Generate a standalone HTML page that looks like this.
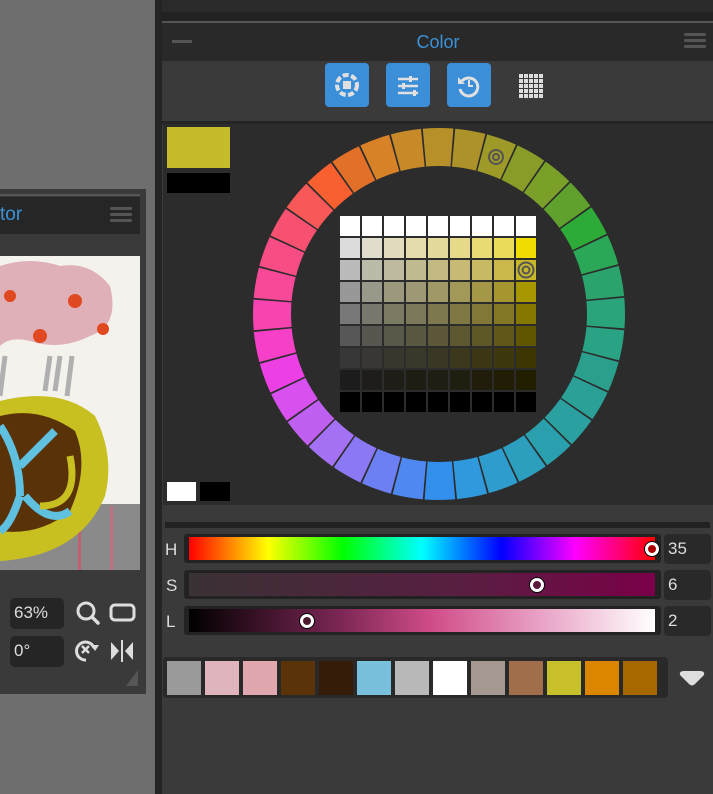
<!DOCTYPE html>
<html><head><meta charset="utf-8"><style>
*{margin:0;padding:0;box-sizing:border-box}
body{width:713px;height:794px;overflow:hidden;background:#6e6e6e;font-family:"Liberation Sans",sans-serif;position:relative}
.a{position:absolute}
</style></head><body>
<!-- left panel -->
<div class="a" style="left:0;top:189px;width:146px;height:505px;background:#3a3a3a"></div>
<div class="a" style="left:0;top:194px;width:140px;height:2px;background:#555"></div>
<div class="a" style="left:0;top:197px;width:140px;height:37px;background:#262626"></div>
<div class="a" style="left:0;top:204px;font-size:19px;color:#3a92d8">tor</div>
<div class="a" style="left:110px;top:207px;width:22px;height:3px;background:#555;border-radius:2px;box-shadow:0 6px 0 #555,0 12px 0 #555"></div>
<svg class="a" style="left:0;top:256px" width="140" height="314" viewBox="0 0 140 314">
<rect width="140" height="314" fill="#f4f2ec"/>
<rect x="0" y="248" width="140" height="66" fill="#8a8a8a"/>
<rect x="78" y="248" width="3" height="66" fill="#c06070"/><rect x="110" y="250" width="3" height="64" fill="#c07080"/>
<path d="M0 10 Q30 0 60 10 Q90 5 110 30 Q120 70 90 80 Q60 95 30 85 Q10 80 0 90Z" fill="#e0b0b8"/>
<circle cx="10" cy="40" r="6" fill="#e04820"/><circle cx="75" cy="45" r="7" fill="#e04820"/><circle cx="40" cy="80" r="7" fill="#e04820"/><circle cx="103" cy="73" r="6" fill="#e04820"/>
<path d="M50 100 l-5 35 M60 100 l-5 35 M72 100 l-5 40 M5 100 l-5 40" stroke="#b0b0b0" stroke-width="5"/>
<path d="M0 145 Q60 130 95 160 Q115 200 105 240 Q80 300 0 305Z" fill="#c8c020"/>
<path d="M0 160 Q40 150 75 175 Q90 210 70 255 Q40 280 0 275Z" fill="#5a3208"/>
<path d="M0 170 Q20 200 20 240 M20 210 Q40 190 55 175 M25 240 Q50 270 70 255 M20 240 Q10 270 0 275" stroke="#60c0e0" stroke-width="8" fill="none"/>
<path d="M40 250 Q80 250 70 200" stroke="#c8c020" stroke-width="7" fill="none"/>
</svg>
<div class="a" style="left:10px;top:598px;width:54px;height:31px;background:#252525;border-radius:5px;color:#ddd;font-size:17px;padding:5px 0 0 4px">63%</div>
<div class="a" style="left:10px;top:636px;width:54px;height:31px;background:#252525;border-radius:5px;color:#ddd;font-size:17px;padding:5px 0 0 4px">0°</div>
<svg class="a" style="left:74px;top:598px" width="70" height="90">
<circle cx="12" cy="13" r="8" stroke="#ddd" stroke-width="3" fill="none"/><path d="M18 19 l6 6" stroke="#ddd" stroke-width="3.5" stroke-linecap="round"/>
<rect x="37" y="7" width="23" height="15" rx="4" stroke="#ddd" stroke-width="3" fill="none"/>
<path d="M20 50 A9 9 0 1 0 12 62" stroke="#ddd" stroke-width="3" fill="none"/><path d="M8 48 l7 7 M15 48 l-7 7" stroke="#ddd" stroke-width="2.5"/><path d="M17 47 l8 0 l-4 6z" fill="#ddd"/>
<path d="M37 44 l8 9 l-8 9z M59 44 l-8 9 l8 9z" fill="#ddd"/><rect x="47" y="42" width="2" height="22" fill="#ddd"/>
<path d="M64 72 l0 16 l-12 0z" fill="#555"/>
</svg>
<!-- divider -->
<div class="a" style="left:155px;top:0;width:7px;height:794px;background:#242424"></div>
<!-- right panel -->
<div class="a" style="left:162px;top:0;width:551px;height:794px;background:#3a3a3a"></div>
<div class="a" style="left:162px;top:0;width:551px;height:12px;background:#2a2a2a"></div>
<div class="a" style="left:162px;top:12px;width:551px;height:9px;background:#222"></div>
<div class="a" style="left:162px;top:21px;width:551px;height:2px;background:#555"></div>
<div class="a" style="left:162px;top:23px;width:551px;height:38px;background:#292929"></div>
<div class="a" style="left:172px;top:40px;width:20px;height:3px;background:#555"></div>
<div class="a" style="left:0;top:32px;width:876px;text-align:center;font-size:18px;color:#3a92d8">Color</div>
<div class="a" style="left:684px;top:33px;width:22px;height:3px;background:#555;border-radius:2px;box-shadow:0 6px 0 #555,0 12px 0 #555"></div>
<div class="a" style="left:325px;top:63px;width:44px;height:44px;background:#3a8fd8;border-radius:4px"></div>
<div class="a" style="left:386px;top:63px;width:44px;height:44px;background:#3a8fd8;border-radius:4px"></div>
<div class="a" style="left:447px;top:63px;width:44px;height:44px;background:#3a8fd8;border-radius:4px"></div>
<svg class="a" style="left:325px;top:63px" width="230" height="44">
<circle cx="22" cy="22" r="10" stroke="#e0e0e0" stroke-width="4" fill="none" stroke-dasharray="6 2.5"/><rect x="18" y="18" width="8" height="8" fill="#e0e0e0"/>
<path d="M73 16 h20 M73 23 h20 M73 30 h20" stroke="#e0e0e0" stroke-width="2.5"/><rect x="84" y="13" width="3" height="6" fill="#e0e0e0"/><rect x="77" y="20" width="3" height="6" fill="#e0e0e0"/><rect x="88" y="27" width="3" height="6" fill="#e0e0e0"/>
<path d="M137 18 A9 9 0 1 1 135 26" stroke="#e0e0e0" stroke-width="3" fill="none"/><path d="M133 14 l0 7 l7 0z" fill="#e0e0e0"/><path d="M144 17 v6 h4" stroke="#e0e0e0" stroke-width="2" fill="none"/>
<g fill="#ddd">
<rect x="194" y="11" width="4" height="4"/><rect x="199" y="11" width="4" height="4"/><rect x="204" y="11" width="4" height="4"/><rect x="209" y="11" width="4" height="4"/><rect x="214" y="11" width="4" height="4"/>
<rect x="194" y="16" width="4" height="4"/><rect x="199" y="16" width="4" height="4"/><rect x="204" y="16" width="4" height="4"/><rect x="209" y="16" width="4" height="4"/><rect x="214" y="16" width="4" height="4"/>
<rect x="194" y="21" width="4" height="4"/><rect x="199" y="21" width="4" height="4"/><rect x="204" y="21" width="4" height="4"/><rect x="209" y="21" width="4" height="4"/><rect x="214" y="21" width="4" height="4"/>
<rect x="194" y="26" width="4" height="4"/><rect x="199" y="26" width="4" height="4"/><rect x="204" y="26" width="4" height="4"/><rect x="209" y="26" width="4" height="4"/><rect x="214" y="26" width="4" height="4"/>
<rect x="194" y="31" width="4" height="4"/><rect x="199" y="31" width="4" height="4"/><rect x="204" y="31" width="4" height="4"/><rect x="209" y="31" width="4" height="4"/><rect x="214" y="31" width="4" height="4"/>
</g>
</svg>
<div class="a" style="left:162px;top:121px;width:551px;height:3px;background:#242424"></div>
<div class="a" style="left:163px;top:124px;width:550px;height:381px;background:#2c2c2c"></div>
<div class="a" style="left:167px;top:127px;width:63px;height:41px;background:#c4bc2a"></div>
<div class="a" style="left:167px;top:173px;width:63px;height:20px;background:#000"></div>
<div class="a" style="left:167px;top:482px;width:29px;height:19px;background:#fff"></div>
<div class="a" style="left:200px;top:482px;width:30px;height:19px;background:#000"></div>
<svg class="a" style="left:0;top:0" width="713" height="520">
<g fill="none" stroke-width="38" stroke-dasharray="9.45 350.55">
<circle cx="439" cy="314" r="167" pathLength="360" stroke="#b8902a" transform="rotate(-95 439 314)"/>
<circle cx="439" cy="314" r="167" pathLength="360" stroke="#ac9228" transform="rotate(-85 439 314)"/>
<circle cx="439" cy="314" r="167" pathLength="360" stroke="#9e9a28" transform="rotate(-75 439 314)"/>
<circle cx="439" cy="314" r="167" pathLength="360" stroke="#8a9c28" transform="rotate(-65 439 314)"/>
<circle cx="439" cy="314" r="167" pathLength="360" stroke="#7aa02a" transform="rotate(-55 439 314)"/>
<circle cx="439" cy="314" r="167" pathLength="360" stroke="#60a02c" transform="rotate(-45 439 314)"/>
<circle cx="439" cy="314" r="167" pathLength="360" stroke="#2eaa38" transform="rotate(-35 439 314)"/>
<circle cx="439" cy="314" r="167" pathLength="360" stroke="#2aa858" transform="rotate(-25 439 314)"/>
<circle cx="439" cy="314" r="167" pathLength="360" stroke="#2aa46c" transform="rotate(-15 439 314)"/>
<circle cx="439" cy="314" r="167" pathLength="360" stroke="#2aa47a" transform="rotate(-5 439 314)"/>
<circle cx="439" cy="314" r="167" pathLength="360" stroke="#2aa284" transform="rotate(5 439 314)"/>
<circle cx="439" cy="314" r="167" pathLength="360" stroke="#2aa08c" transform="rotate(15 439 314)"/>
<circle cx="439" cy="314" r="167" pathLength="360" stroke="#2aa096" transform="rotate(25 439 314)"/>
<circle cx="439" cy="314" r="167" pathLength="360" stroke="#2aa0a0" transform="rotate(35 439 314)"/>
<circle cx="439" cy="314" r="167" pathLength="360" stroke="#2aa0ae" transform="rotate(45 439 314)"/>
<circle cx="439" cy="314" r="167" pathLength="360" stroke="#2c9ebe" transform="rotate(55 439 314)"/>
<circle cx="439" cy="314" r="167" pathLength="360" stroke="#2e9ccc" transform="rotate(65 439 314)"/>
<circle cx="439" cy="314" r="167" pathLength="360" stroke="#3098dc" transform="rotate(75 439 314)"/>
<circle cx="439" cy="314" r="167" pathLength="360" stroke="#3290ec" transform="rotate(85 439 314)"/>
<circle cx="439" cy="314" r="167" pathLength="360" stroke="#5088f2" transform="rotate(95 439 314)"/>
<circle cx="439" cy="314" r="167" pathLength="360" stroke="#6c80f4" transform="rotate(105 439 314)"/>
<circle cx="439" cy="314" r="167" pathLength="360" stroke="#8a78f4" transform="rotate(115 439 314)"/>
<circle cx="439" cy="314" r="167" pathLength="360" stroke="#a470f4" transform="rotate(125 439 314)"/>
<circle cx="439" cy="314" r="167" pathLength="360" stroke="#c060f2" transform="rotate(135 439 314)"/>
<circle cx="439" cy="314" r="167" pathLength="360" stroke="#d850f0" transform="rotate(145 439 314)"/>
<circle cx="439" cy="314" r="167" pathLength="360" stroke="#ec40e4" transform="rotate(155 439 314)"/>
<circle cx="439" cy="314" r="167" pathLength="360" stroke="#f640c8" transform="rotate(165 439 314)"/>
<circle cx="439" cy="314" r="167" pathLength="360" stroke="#f844b0" transform="rotate(175 439 314)"/>
<circle cx="439" cy="314" r="167" pathLength="360" stroke="#f84898" transform="rotate(185 439 314)"/>
<circle cx="439" cy="314" r="167" pathLength="360" stroke="#f84c84" transform="rotate(195 439 314)"/>
<circle cx="439" cy="314" r="167" pathLength="360" stroke="#f85070" transform="rotate(205 439 314)"/>
<circle cx="439" cy="314" r="167" pathLength="360" stroke="#f85858" transform="rotate(215 439 314)"/>
<circle cx="439" cy="314" r="167" pathLength="360" stroke="#f86030" transform="rotate(225 439 314)"/>
<circle cx="439" cy="314" r="167" pathLength="360" stroke="#e27028" transform="rotate(235 439 314)"/>
<circle cx="439" cy="314" r="167" pathLength="360" stroke="#d88228" transform="rotate(245 439 314)"/>
<circle cx="439" cy="314" r="167" pathLength="360" stroke="#c88a28" transform="rotate(255 439 314)"/>
</g>
<circle cx="496" cy="157" r="7" fill="none" stroke="#555" stroke-width="2"/><circle cx="496" cy="157" r="3" fill="none" stroke="#555" stroke-width="2"/>
</svg>
<div class="a" style="left:340px;top:216px;width:198px;height:196px;display:grid;grid-template-columns:repeat(9,20px);grid-auto-rows:20px;gap:2px">
<i style="background:#fff"></i><i style="background:#fff"></i><i style="background:#fff"></i><i style="background:#fff"></i><i style="background:#fff"></i><i style="background:#fff"></i><i style="background:#fff"></i><i style="background:#fff"></i><i style="background:#fff"></i>
<i style="background:#dcdcdc"></i><i style="background:#e0ddcc"></i><i style="background:#e2dcbc"></i><i style="background:#e4dcac"></i><i style="background:#e4da9c"></i><i style="background:#e6da8a"></i><i style="background:#e8da74"></i><i style="background:#eadc58"></i><i style="background:#f0dc00"></i>
<i style="background:#bababa"></i><i style="background:#bcbaa8"></i><i style="background:#bebaa0"></i><i style="background:#c0ba90"></i><i style="background:#c2b882"></i><i style="background:#c6ba74"></i><i style="background:#c8ba62"></i><i style="background:#cab84a"></i><i style="background:#c8b828"></i>
<i style="background:#989898"></i><i style="background:#9a9888"></i><i style="background:#9c987e"></i><i style="background:#9e9874"></i><i style="background:#a09866"></i><i style="background:#a29858"></i><i style="background:#a49848"></i><i style="background:#a69630"></i><i style="background:#a89800"></i>
<i style="background:#787878"></i><i style="background:#7a786c"></i><i style="background:#7c7a62"></i><i style="background:#7c785a"></i><i style="background:#7e784e"></i><i style="background:#807842"></i><i style="background:#827836"></i><i style="background:#847826"></i><i style="background:#847800"></i>
<i style="background:#575757"></i><i style="background:#58574f"></i><i style="background:#5a5848"></i><i style="background:#5a5840"></i><i style="background:#5c5838"></i><i style="background:#5e5830"></i><i style="background:#5e5826"></i><i style="background:#605818"></i><i style="background:#605600"></i>
<i style="background:#373737"></i><i style="background:#383733"></i><i style="background:#38372e"></i><i style="background:#3a382a"></i><i style="background:#3a3824"></i><i style="background:#3c381e"></i><i style="background:#3c3816"></i><i style="background:#3e380e"></i><i style="background:#3e3600"></i>
<i style="background:#1c1c1c"></i><i style="background:#1e1d1a"></i><i style="background:#1e1d18"></i><i style="background:#1e1d14"></i><i style="background:#201e12"></i><i style="background:#201e0e"></i><i style="background:#201e0a"></i><i style="background:#221e06"></i><i style="background:#221e00"></i>
<i style="background:#000"></i><i style="background:#000"></i><i style="background:#000"></i><i style="background:#000"></i><i style="background:#000"></i><i style="background:#000"></i><i style="background:#000"></i><i style="background:#000"></i><i style="background:#000"></i>
</div>
<svg class="a" style="left:516px;top:260px" width="20" height="20"><circle cx="10" cy="10" r="7.5" fill="none" stroke="#555" stroke-width="2"/><circle cx="10" cy="10" r="3.5" fill="none" stroke="#555" stroke-width="2"/></svg>
<!-- sliders -->
<div class="a" style="left:165px;top:522px;width:545px;height:6px;background:#222"></div>
<div class="a" style="left:165px;top:540px;font-size:17px;color:#ddd">H</div>
<div class="a" style="left:166px;top:576px;font-size:17px;color:#ddd">S</div>
<div class="a" style="left:166px;top:612px;font-size:17px;color:#ddd">L</div>
<div class="a" style="left:184px;top:534px;width:477px;height:29px;background:#222;border-radius:3px"></div>
<div class="a" style="left:189px;top:537px;width:466px;height:23px;background:linear-gradient(90deg,#f00,#ff0 17%,#0f0 33%,#0ff 50%,#00f 67%,#f0f 83%,#f00)"></div>
<div class="a" style="left:184px;top:570px;width:477px;height:29px;background:#222;border-radius:3px"></div>
<div class="a" style="left:189px;top:573px;width:466px;height:23px;background:linear-gradient(90deg,#3a3235,#5a1e42 60%,#7a0048)"></div>
<div class="a" style="left:184px;top:606px;width:477px;height:29px;background:#222;border-radius:3px"></div>
<div class="a" style="left:189px;top:609px;width:466px;height:23px;background:linear-gradient(90deg,#000,#7a2654 32%,#d04c88 52%,#e8a0c4 75%,#fff)"></div>
<div class="a" style="left:645px;top:542px;width:14px;height:14px;border-radius:50%;background:#a00;border:3.5px solid #fff;box-shadow:0 0 0 1px #000"></div>
<div class="a" style="left:530px;top:578px;width:14px;height:14px;border-radius:50%;background:#5a1a3a;border:3.5px solid #fff;box-shadow:0 0 0 1px #000"></div>
<div class="a" style="left:300px;top:614px;width:14px;height:14px;border-radius:50%;background:#4a1a30;border:3.5px solid #fff;box-shadow:0 0 0 1px #000"></div>
<div class="a" style="left:664px;top:534px;width:47px;height:30px;background:#292929;border-radius:4px;color:#ddd;font-size:17px;padding:5px 0 0 4px">35</div>
<div class="a" style="left:664px;top:570px;width:47px;height:30px;background:#292929;border-radius:4px;color:#ddd;font-size:17px;padding:5px 0 0 4px">6</div>
<div class="a" style="left:664px;top:606px;width:47px;height:30px;background:#292929;border-radius:4px;color:#ddd;font-size:17px;padding:5px 0 0 4px">2</div>
<!-- palette -->
<div class="a" style="left:163px;top:657px;width:505px;height:41px;background:#292929;border-radius:3px"></div>
<div class="a" style="left:167px;top:661px;display:flex;gap:4px">
<i style="width:34px;height:34px;background:#9a9a9a"></i><i style="width:34px;height:34px;background:#e0b4bc"></i><i style="width:34px;height:34px;background:#e0a8ae"></i><i style="width:34px;height:34px;background:#5a3408"></i><i style="width:34px;height:34px;background:#341c08"></i><i style="width:34px;height:34px;background:#78c0dc"></i><i style="width:34px;height:34px;background:#b8b8b8"></i><i style="width:34px;height:34px;background:#fff"></i><i style="width:34px;height:34px;background:#a49890"></i><i style="width:34px;height:34px;background:#a06e4a"></i><i style="width:34px;height:34px;background:#c8c02a"></i><i style="width:34px;height:34px;background:#dc8600"></i><i style="width:34px;height:34px;background:#a86800"></i>
</div>
<svg class="a" style="left:679px;top:670px" width="26" height="18"><path d="M1 5 Q0 1 5 1 H21 Q26 1 25 5 L16 14 Q13 17 10 14Z" fill="#ddd"/></svg>
</body></html>
